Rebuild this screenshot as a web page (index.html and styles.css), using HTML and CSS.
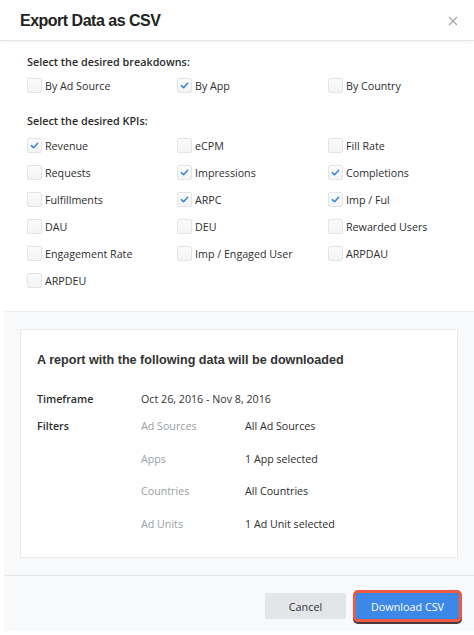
FILE: index.html
```html
<!DOCTYPE html>
<html>
<head>
<meta charset="utf-8">
<link rel="stylesheet" href="styles.css">
</head>
<body>
<div class="modal">
  <header class="modal-header">
    <h1 class="modal-title">Export Data as CSV</h1>
    <span class="close" aria-label="Close">
      <svg width="10" height="10" viewBox="0 0 10 10"><path d="M1 1L9 9M9 1L1 9" stroke="#a3a8ad" stroke-width="1.3" fill="none"/></svg>
    </span>
  </header>

  <section class="modal-body">
    <div class="group-title">Select the desired breakdowns:</div>
    <div class="check-grid">
      <label class="check"><span class="box"></span>By Ad Source</label>
      <label class="check"><span class="box on"><svg viewBox="0 0 14 14"><path d="M3.6 7.2L6 9.4L10.4 4.6" stroke="#3b86d9" stroke-width="1.7" fill="none" stroke-linecap="round" stroke-linejoin="round"/></svg></span>By App</label>
      <label class="check"><span class="box"></span>By Country</label>
    </div>

    <div class="group-title second">Select the desired KPIs:</div>
    <div class="check-grid">
      <label class="check"><span class="box on"><svg viewBox="0 0 14 14"><path d="M3.6 7.2L6 9.4L10.4 4.6" stroke="#3b86d9" stroke-width="1.7" fill="none" stroke-linecap="round" stroke-linejoin="round"/></svg></span>Revenue</label>
      <label class="check"><span class="box"></span>eCPM</label>
      <label class="check"><span class="box"></span>Fill Rate</label>

      <label class="check"><span class="box"></span>Requests</label>
      <label class="check"><span class="box on"><svg viewBox="0 0 14 14"><path d="M3.6 7.2L6 9.4L10.4 4.6" stroke="#3b86d9" stroke-width="1.7" fill="none" stroke-linecap="round" stroke-linejoin="round"/></svg></span>Impressions</label>
      <label class="check"><span class="box on"><svg viewBox="0 0 14 14"><path d="M3.6 7.2L6 9.4L10.4 4.6" stroke="#3b86d9" stroke-width="1.7" fill="none" stroke-linecap="round" stroke-linejoin="round"/></svg></span>Completions</label>

      <label class="check"><span class="box"></span>Fulfillments</label>
      <label class="check"><span class="box on"><svg viewBox="0 0 14 14"><path d="M3.6 7.2L6 9.4L10.4 4.6" stroke="#3b86d9" stroke-width="1.7" fill="none" stroke-linecap="round" stroke-linejoin="round"/></svg></span>ARPC</label>
      <label class="check"><span class="box on"><svg viewBox="0 0 14 14"><path d="M3.6 7.2L6 9.4L10.4 4.6" stroke="#3b86d9" stroke-width="1.7" fill="none" stroke-linecap="round" stroke-linejoin="round"/></svg></span>Imp / Ful</label>

      <label class="check"><span class="box"></span>DAU</label>
      <label class="check"><span class="box"></span>DEU</label>
      <label class="check"><span class="box"></span>Rewarded Users</label>

      <label class="check"><span class="box"></span>Engagement Rate</label>
      <label class="check"><span class="box"></span>Imp / Engaged User</label>
      <label class="check"><span class="box"></span>ARPDAU</label>

      <label class="check"><span class="box"></span>ARPDEU</label>
    </div>
  </section>

  <section class="summary">
    <div class="card">
      <h2 class="card-title">A report with the following data will be downloaded</h2>
      <div class="row timeframe">
        <div class="key">Timeframe</div>
        <div class="val">Oct 26, 2016 - Nov 8, 2016</div>
      </div>
      <div class="row filters">
        <div class="key">Filters</div>
        <div class="filter-grid">
          <div class="fkey">Ad Sources</div><div class="fval">All Ad Sources</div>
          <div class="fkey">Apps</div><div class="fval">1 App selected</div>
          <div class="fkey">Countries</div><div class="fval">All Countries</div>
          <div class="fkey">Ad Units</div><div class="fval">1 Ad Unit selected</div>
        </div>
      </div>
    </div>
  </section>

  <footer class="modal-footer">
    <button class="btn btn-cancel">Cancel</button>
    <button class="btn btn-primary">Download CSV</button>
  </footer>
</div>
</body>
</html>
```
FILE: styles.css
```css
html, body {
  margin: 0;
  padding: 0;
  background: #ffffff;
}
body {
  font-family: "Open Sans", "Liberation Sans", sans-serif;
  color: #333;
  width: 474px;
  height: 635px;
  overflow: hidden;
}
.modal {
  width: 474px;
}
.modal-header {
  height: 40px;
  display: flex;
  align-items: center;
  justify-content: space-between;
  padding: 0 16px 0 20px;
  border-bottom: 1px solid #e6e8ea;
  box-shadow: 0 1px 3px rgba(0, 0, 0, 0.06);
  position: relative;
  z-index: 1;
}
.modal-title {
  margin: 0;
  font-family: "Liberation Sans", Arial, sans-serif;
  font-weight: bold;
  font-size: 16px;
  color: #222;
  letter-spacing: -0.5px;
  padding-top: 1px;
}
.close {
  display: flex;
  width: 10px;
  height: 10px;
  margin-top: 1px;
}
.modal-body {
  padding: 12px 0 17px 27px;
}
.group-title {
  font-size: 10.8px;
  font-weight: 600;
  line-height: 18px;
  margin-bottom: 1px;
  color: #2a2a2a;
}
.group-title.second {
  margin-top: 13px;
  margin-bottom: 2px;
}
.check-grid {
  display: grid;
  grid-template-columns: 150px 151px 1fr;
  grid-auto-rows: 27px;
}
.check {
  display: flex;
  align-items: center;
  font-size: 10.7px;
  color: #2e2e2e;
}
.box {
  width: 13px;
  height: 13px;
  border: 1px solid #e2e4e6;
  border-radius: 2px;
  background: linear-gradient(#fbfbfb, #f3f4f5);
  margin-right: 3px;
  display: flex;
  flex: none;
}
.box svg {
  width: 13px;
  height: 13px;
}
.summary {
  margin-left: 4px;
  background: #f8f9fb;
  border-top: 1px solid #eceef0;
  padding: 17px 16px 17px 16px;
}
.card {
  background: #fff;
  border: 1px solid #e8eaec;
  padding: 21px 16px 24px 16px;
}
.card-title {
  margin: 0 0 21px 0;
  font-family: "Liberation Sans", Arial, sans-serif;
  font-weight: bold;
  font-size: 12.6px;
  line-height: 18px;
  color: #333;
}
.row {
  display: flex;
  font-size: 10.7px;
  line-height: 18px;
}
.row .key {
  width: 104px;
  flex: none;
  font-weight: 600;
  color: #2e2e2e;
}
.timeframe {
  margin-bottom: 9px;
}
.filter-grid {
  display: grid;
  grid-template-columns: 104px 1fr;
  row-gap: 14.7px;
}
.fkey {
  color: #9a9ea3;
}
.fval {
  color: #2e2e2e;
}
.modal-footer {
  margin-left: 4px;
  background: #f8f9fb;
  border-top: 1px solid #e6e8ea;
  padding: 17px 15px 12px 0;
  display: flex;
  justify-content: flex-end;
  gap: 10px;
}
.btn {
  height: 26px;
  border: none;
  border-radius: 2px;
  font-family: "Open Sans", "Liberation Sans", sans-serif;
  font-size: 10.8px;
  padding: 0;
  cursor: pointer;
}
.btn-cancel {
  width: 81px;
  background: #e3e5e8;
  color: #333;
}
.btn-primary {
  width: 103px;
  background: #3b88e8;
  color: #fff;
  outline: 3px solid #ea5a44;
  box-shadow: 0 2px 0 3px #4a3a3a;
}
```
